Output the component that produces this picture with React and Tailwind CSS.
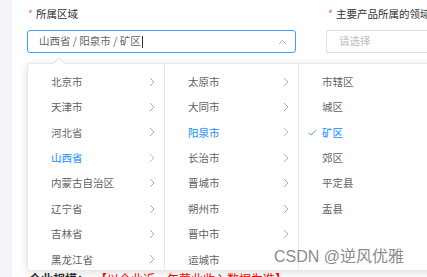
import React from "react";

const Chevron = ({ active }) => (
  <svg width="6" height="10" viewBox="0 0 6 10" className="shrink-0">
    <polyline points="1,1 5,5 1,9" fill="none" stroke={active ? "#9fc9f7" : "#a8abb2"} strokeWidth="1" />
  </svg>
);

const Check = () => (
  <svg width="9" height="7" viewBox="0 0 9 7" className="shrink-0">
    <polyline points="0.8,3.8 3.2,6 8.2,1" fill="none" stroke="#409eff" strokeWidth="1" />
  </svg>
);

const col1 = ["北京市", "天津市", "河北省", "山西省", "内蒙古自治区", "辽宁省", "吉林省", "黑龙江省"];
const col2 = ["太原市", "大同市", "阳泉市", "长治市", "晋城市", "朔州市", "晋中市", "运城市"];
const col3 = ["市辖区", "城区", "矿区", "郊区", "平定县", "盂县"];

function Menu({ items, active, leaf, width, last }) {
  return (
    <div className={`shrink-0 pt-[5px] ${last ? "" : "border-r border-[#e4e7ed]"}`} style={{ width }}>
      {items.map((t) => {
        const isA = t === active;
        return (
          <div key={t} className="h-[25.4px] flex items-center pl-[23px] pr-[9px] relative">
            {leaf && isA && (
              <span className="absolute left-[9px] top-[9px]"><Check /></span>
            )}
            <span className={`flex-1 text-[10.5px] ${isA ? "text-[#409eff] font-medium" : "text-[#606266]"}`}>{t}</span>
            {!leaf && t !== "运城市" && <Chevron active={isA} />}
          </div>
        );
      })}
    </div>
  );
}

export default function App() {
  return (
    <div
      className="w-[427px] h-[277px] overflow-hidden relative flex bg-white"
      style={{ fontFamily: '"Noto Sans CJK SC", "Noto Sans", sans-serif' }}
    >
      <div className="w-[12px] shrink-0 bg-[#f4f5fb]" />
      <div className="flex-1 pl-[15px] pt-[7px] flex flex-col">
        <div className="flex gap-[30px]">
          <div className="w-[269px] shrink-0">
            <div className="h-[14px] leading-[14px] text-[10.5px] text-[#303133] flex">
              <span className="text-[#f56c6c] mr-[3px] ml-[1px]">*</span>所属区域
            </div>
            <div className="mt-[9px] h-[23px] border border-[#409eff] rounded-[3px] flex items-center pl-[11px] pr-[8px]">
              <span className="text-[10.5px] text-[#606266] leading-none">山西省 / 阳泉市 / 矿区</span>
              <span className="w-px h-[12px] bg-[#303133] ml-[1px]" />
              <span className="flex-1" />
              <svg width="9" height="6" viewBox="0 0 9 6">
                <polyline points="1,5 4.5,1.5 8,5" fill="none" stroke="#b0b3b8" strokeWidth="1" />
              </svg>
            </div>
          </div>
          <div className="flex-1 min-w-0">
            <div className="h-[14px] leading-[14px] text-[10.5px] text-[#303133] flex whitespace-nowrap">
              <span className="text-[#f56c6c] mr-[3px] ml-[2px]">*</span>主要产品所属的领域
            </div>
            <div className="mt-[9px] h-[23px] border border-[#dcdfe6] border-r-0 rounded-l-[3px] flex items-center pl-[12px]">
              <span className="text-[10.5px] text-[#b8bcc4] leading-none">请选择</span>
            </div>
          </div>
        </div>
        <div className="mt-[219px] flex items-start text-[12px] leading-[14px] whitespace-nowrap">
          <span className="font-bold text-[#303133] ml-[2px]">企业规模：</span>
          <span className="text-[#ff0000] ml-[6px]">【以企业近一年营业收入数据为准】</span>
        </div>
      </div>

      {/* dropdown */}
      <div className="absolute left-[27px] top-[63px] w-[420px] h-[208px] bg-white border border-[#e4e7ed] rounded-[3px] shadow-[0_2px_10px_rgba(0,0,0,0.12)] flex">
        <div className="absolute left-[27px] -top-[5px] w-[8px] h-[8px] bg-white border-l border-t border-[#e4e7ed] rotate-45" />
        <div className="flex overflow-hidden h-full">
          <Menu items={col1} active="山西省" width={137} />
          <Menu items={col2} active="阳泉市" width={134} />
          <Menu items={col3} active="矿区" leaf width={140} last />
        </div>
      </div>

      <div
        className="absolute left-[274px] top-[247px] text-[16px] leading-[20px] text-[#8c8c8c] whitespace-nowrap"
        style={{ fontFamily: '"Liberation Sans", "Noto Sans CJK SC", sans-serif', textShadow: "0 0 2px #fff" }}
      >
        CSDN @逆风优雅
      </div>
    </div>
  );
}
